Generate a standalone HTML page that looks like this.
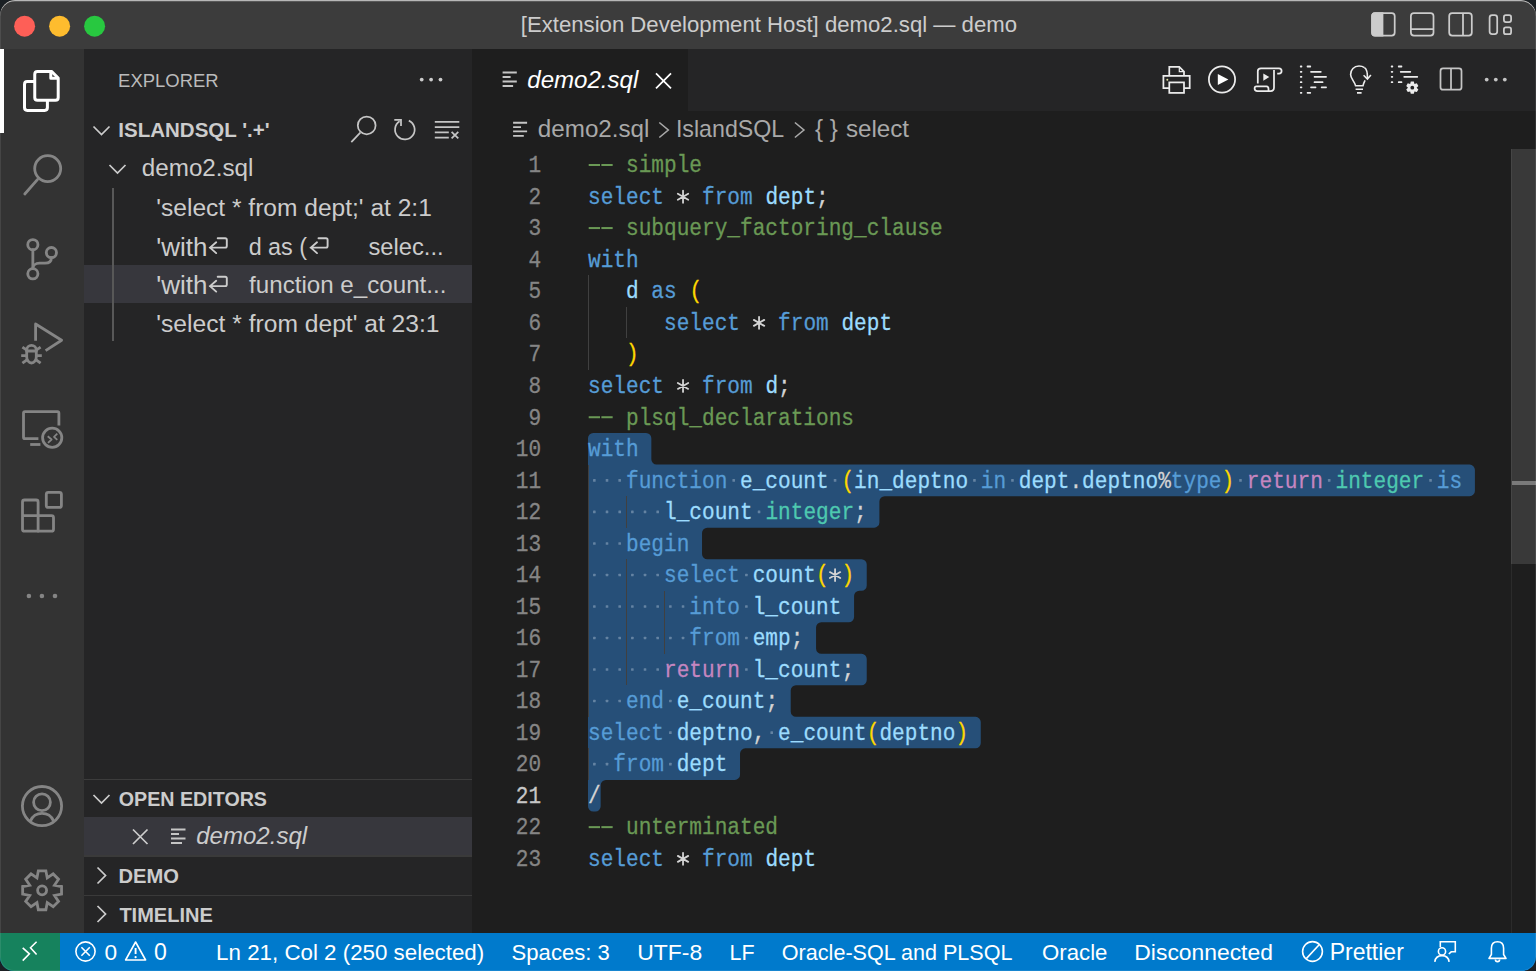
<!DOCTYPE html><html><head><meta charset="utf-8"><style>
html,body{margin:0;padding:0;width:1536px;height:971px;overflow:hidden;background:#1b2024;}
.win{position:absolute;left:0;top:0;width:1536px;height:971px;overflow:hidden;border-radius:15px 15px 14px 14px;background:#1e1e1e;}
.bord{position:absolute;left:0;top:0;width:1536px;height:971px;border-radius:15px 15px 14px 14px;box-shadow:inset 0 0 0 1px rgba(255,255,255,0.09);pointer-events:none;}
.t{position:absolute;white-space:pre;line-height:1;}
svg{position:absolute;left:0;top:0;overflow:visible}
</style></head><body><div class="win">
<div style="position:absolute;left:0px;top:0px;width:1536px;height:49px;background:#3c3c3c;"></div>
<div style="position:absolute;left:0;top:0;width:1536px;height:30px;border-radius:15px 15px 0 0;box-shadow:inset 0 1.3px 0 0 #b0b0b0;"></div>
<div style="position:absolute;left:0px;top:49px;width:84px;height:884px;background:#333333;"></div>
<div style="position:absolute;left:0px;top:49px;width:3.5px;height:84px;background:#ffffff;"></div>
<div style="position:absolute;left:84px;top:49px;width:388px;height:884px;background:#252526;"></div>
<div style="position:absolute;left:472px;top:49px;width:1064px;height:61.5px;background:#252526;"></div>
<div style="position:absolute;left:472px;top:49px;width:216px;height:61.5px;background:#1e1e1e;"></div>
<div style="position:absolute;left:0px;top:932.5px;width:1536px;height:38.5px;background:#007acc;"></div>
<div style="position:absolute;left:0px;top:932.5px;width:60px;height:38.5px;background:#16825d;"></div>
<svg width="1536" height="971"><circle cx="24.6" cy="26.2" r="10.5" fill="#fe5f57"/><circle cx="59.6" cy="26.2" r="10.5" fill="#febc2e"/><circle cx="94.6" cy="26.2" r="10.5" fill="#28c840"/></svg>
<div class="t" style="left:520.75px;top:14.40px;font-size:22.16px;color:#cccccc;font-weight:normal;font-style:normal;font-family:'Liberation Sans', sans-serif;">[Extension Development Host] demo2.sql — demo</div>
<svg width="1536" height="971" fill="none" stroke="#cccccc" stroke-width="1.75"><rect x="1372.1" y="13" width="22.6" height="22.6" rx="3"/><path d="M1372.1,16 Q1372.1,13 1375.1,13 L1382.5,13 L1382.5,35.6 L1375.1,35.6 Q1372.1,35.6 1372.1,32.6 Z" fill="#cccccc"/><rect x="1410.9" y="13" width="22.6" height="22.6" rx="3"/><line x1="1410.9" y1="29" x2="1433.5" y2="29"/><rect x="1449.2" y="13" width="22.6" height="22.6" rx="3"/><line x1="1463" y1="13" x2="1463" y2="35.6"/><rect x="1489.6" y="15.2" width="7.6" height="18.8" rx="2.5"/><rect x="1503.9" y="15.2" width="7.2" height="6.8" rx="2"/><rect x="1503.9" y="27.4" width="7.2" height="6.8" rx="2"/></svg>
<svg width="1536" height="971" fill="none" stroke="#ffffff" stroke-width="3" stroke-linejoin="round"><path d="M34.75,74.2 Q34.75,71.4 37.5,71.4 L51.5,71.4 L58.2,78 L58.2,97.4 Q58.2,100.2 55.4,100.2 L37.5,100.2 Q34.75,100.2 34.75,97.4 Z"/><path d="M50.8,71.4 L50.8,78.3 L58.2,78.3"/><path d="M34.75,81.6 L27.3,81.6 Q24.5,81.6 24.5,84.4 L24.5,107.6 Q24.5,110.4 27.3,110.4 L44.6,110.4 Q47.4,110.4 47.4,107.6 L47.4,100.2"/></svg>
<svg width="1536" height="971" fill="none" stroke="#858585" stroke-width="2.8" stroke-linecap="round" stroke-linejoin="round"><circle cx="47.7" cy="168.6" r="13"/><line x1="24.8" y1="194" x2="37.6" y2="179.4"/><circle cx="32.85" cy="244.65" r="5.1"/><circle cx="51.4" cy="252.6" r="5.1"/><circle cx="32.85" cy="273.8" r="5.1"/><line x1="32.85" y1="249.8" x2="32.85" y2="268.7"/><path d="M51.4,257.7 C51.4,261.5 49,263.2 45,263.2 L39.5,263.2 C35.5,263.2 32.85,265.5 32.85,268.7"/><path d="M35.6,340.8 L35.6,324 L61.6,340.3 L45.6,350.6" stroke-linecap="butt"/><path d="M26.7,357 L26.7,350.2 A4.8,4.8 0 0 1 36.3,350.2 L36.3,357 A4.8,6 0 0 1 26.7,357 Z"/><line x1="26.7" y1="351" x2="36.3" y2="351"/><path d="M22.4,347.2 L26.8,350.2 M40.6,347.2 L36.2,350.2 M21.2,355.6 L26.7,355.6 M41.8,355.6 L36.3,355.6 M22.4,363.2 L26.9,359.8 M40.6,363.2 L36.1,359.8" stroke-linecap="butt"/><path d="M58.9,425.5 L58.9,413.2 Q58.9,411.7 57.4,411.7 L25,411.7 Q23.5,411.7 23.5,413.2 L23.5,437.2 Q23.5,438.7 25,438.7 L38.4,438.7" stroke-linecap="butt"/><line x1="30.2" y1="444.5" x2="40.4" y2="444.5" stroke-linecap="butt"/><circle cx="52.2" cy="437.7" r="9.6"/><path d="M47.7,436.2 L51.6,439.5 L48,442.8 M57.3,433.6 L54,436.8 L57.3,439.8" stroke-width="1.8" stroke-linecap="butt"/><path d="M38.1,515.6 L38.1,502 Q38.1,500 36.1,500 L24.5,500 Q22.5,500 22.5,502 L22.5,529.2 Q22.5,531.2 24.5,531.2 L51.5,531.2 Q53.5,531.2 53.5,529.2 L53.5,517.6 Q53.5,515.6 51.5,515.6 L22.5,515.6"/><line x1="38.1" y1="515.6" x2="38.1" y2="531.2"/><rect x="46.3" y="492.3" width="15.1" height="15.1" rx="2"/><circle cx="42" cy="806.1" r="19.6"/><circle cx="42" cy="802.2" r="8.4"/><path d="M30.6,820.6 C32.6,816 37,813.3 42,813.3 C47,813.3 51.4,816 53.4,820.6"/></svg>
<svg width="1536" height="971" fill="#858585"><circle cx="28.9" cy="596" r="2.3"/><circle cx="41.9" cy="596" r="2.3"/><circle cx="55" cy="596" r="2.3"/></svg>
<svg width="1536" height="971" fill="none" stroke="#858585" stroke-width="2.8" stroke-linejoin="miter"><path d="M36.97,877.92 L38.32,870.86 L45.88,870.86 L47.23,877.92 L53.17,873.89 L58.51,879.23 L54.48,885.17 L61.54,886.52 L61.54,894.08 L54.48,895.43 L58.51,901.37 L53.17,906.71 L47.23,902.68 L45.88,909.74 L38.32,909.74 L36.97,902.68 L31.03,906.71 L25.69,901.37 L29.72,895.43 L22.66,894.08 L22.66,886.52 L29.72,885.17 L25.69,879.23 L31.03,873.89 Z"/><circle cx="42.1" cy="890.3" r="4.5"/></svg>
<div class="t" style="left:118.12px;top:72.40px;font-size:18.48px;color:#bbbbbb;font-weight:normal;font-style:normal;font-family:'Liberation Sans', sans-serif;">EXPLORER</div>
<svg width="1536" height="971" fill="#cccccc"><circle cx="421.7" cy="79.6" r="1.9"/><circle cx="431.1" cy="79.6" r="1.9"/><circle cx="440.5" cy="79.6" r="1.9"/></svg>
<svg width="1536" height="971" fill="none" stroke="#cccccc" stroke-width="1.75" stroke-linecap="butt" stroke-linejoin="miter"><path d="M93.5,126.5 L101.5,134.5 L109.5,126.5"/><path d="M109.5,165 L117.5,173 L125.5,165"/><path d="M93.5,795 L101.5,803 L109.5,795"/><path d="M97.5,867.5 L105.5,875.5 L97.5,883.5"/><path d="M97.5,906 L105.5,914 L97.5,922"/></svg>
<svg width="1536" height="971" fill="none" stroke="#c5c5c5" stroke-width="1.75"><circle cx="366.7" cy="125.4" r="8.9"/><line x1="351.3" y1="142.2" x2="360.3" y2="132.6"/><path d="M408.8,120.6 A9.8,9.8 0 1 1 399.6,121.3"/><path d="M394.3,119.8 L401,119.8 L401,126"/><path d="M434.8,121.8 L459.3,121.8 M434.8,127 L459.3,127 M434.8,132.3 L448.8,132.3 M434.8,137.6 L448.8,137.6 M451.6,131.8 L458.3,138.4 M458.3,131.8 L451.6,138.4"/></svg>
<div class="t" style="left:118.37px;top:120.10px;font-size:20.51px;color:#cccccc;font-weight:bold;font-style:normal;font-family:'Liberation Sans', sans-serif;">ISLANDSQL &#x27;.+&#x27;</div>
<div class="t" style="left:141.83px;top:156.30px;font-size:24.2px;color:#cccccc;font-weight:normal;font-style:normal;font-family:'Liberation Sans', sans-serif;">demo2.sql</div>
<div style="position:absolute;left:84px;top:264.8px;width:388px;height:38.4px;background:#37373d;"></div>
<div style="position:absolute;left:112.4px;top:188px;width:1.2px;height:153px;background:#585858;"></div>
<div class="t" style="left:156.37px;top:196.00px;font-size:24.55px;color:#cccccc;font-weight:normal;font-style:normal;font-family:'Liberation Sans', sans-serif;">&#x27;select * from dept;&#x27; at 2:1</div>
<div class="t" style="left:156.3px;top:233.50px;font-size:25.98px;color:#cccccc;font-weight:normal;font-style:normal;font-family:'Liberation Sans', sans-serif;">&#x27;with</div>
<div class="t" style="left:248.67px;top:235.50px;font-size:23.35px;color:#cccccc;font-weight:normal;font-style:normal;font-family:'Liberation Sans', sans-serif;">d as (</div>
<div class="t" style="left:368.43px;top:235.50px;font-size:23.72px;color:#cccccc;font-weight:normal;font-style:normal;font-family:'Liberation Sans', sans-serif;">selec...</div>
<div class="t" style="left:156.3px;top:272.00px;font-size:25.98px;color:#cccccc;font-weight:normal;font-style:normal;font-family:'Liberation Sans', sans-serif;">&#x27;with</div>
<div class="t" style="left:249.06px;top:273.00px;font-size:24.17px;color:#cccccc;font-weight:normal;font-style:normal;font-family:'Liberation Sans', sans-serif;">function e_count...</div>
<svg width="1536" height="971" fill="none" stroke="#cccccc" stroke-width="1.9" stroke-linejoin="round" stroke-linecap="round"><path d="M209.7,247.6 L225.2,247.6 Q226.79999999999998,247.6 226.79999999999998,246.0 L226.79999999999998,239.79999999999998 Q226.79999999999998,238.2 225.2,238.2 L217.7,238.2 M216.2,242.29999999999998 L210.0,247.6 L216.2,253.1"/><path d="M310.5,247.6 L326,247.6 Q327.6,247.6 327.6,246.0 L327.6,239.79999999999998 Q327.6,238.2 326,238.2 L318.5,238.2 M317,242.29999999999998 L310.8,247.6 L317,253.1"/><path d="M209.7,286.1 L225.2,286.1 Q226.79999999999998,286.1 226.79999999999998,284.5 L226.79999999999998,278.3 Q226.79999999999998,276.70000000000005 225.2,276.70000000000005 L217.7,276.70000000000005 M216.2,280.8 L210.0,286.1 L216.2,291.6"/></svg>
<div class="t" style="left:156.37px;top:311.50px;font-size:24.63px;color:#cccccc;font-weight:normal;font-style:normal;font-family:'Liberation Sans', sans-serif;">&#x27;select * from dept&#x27; at 23:1</div>
<div style="position:absolute;left:84px;top:778.5px;width:388px;height:1px;background:#3c3c3c;"></div>
<div class="t" style="left:118.81px;top:789.90px;font-size:19.66px;color:#cccccc;font-weight:bold;font-style:normal;font-family:'Liberation Sans', sans-serif;">OPEN EDITORS</div>
<div style="position:absolute;left:84px;top:817px;width:388px;height:38.2px;background:#37373d;"></div>
<svg width="1536" height="971" fill="none" stroke="#cccccc" stroke-width="1.75"><path d="M133,829.5 L147.5,844 M147.5,829.5 L133,844"/></svg>
<svg width="1536" height="971" fill="none" stroke="#c5c5c5" stroke-width="1.9"><path d="M171,829.5 L185.5,829.5 M171,834 L179,834 M171,838.5 L185.5,838.5 M171,843 L182,843"/></svg>
<div class="t" style="left:196.18px;top:823.50px;font-size:24.05px;color:#cccccc;font-weight:normal;font-style:italic;font-family:'Liberation Sans', sans-serif;">demo2.sql</div>
<div style="position:absolute;left:84px;top:855.2px;width:388px;height:1.5px;background:#3a3a3a;"></div>
<div class="t" style="left:118.39px;top:866.20px;font-size:20.16px;color:#cccccc;font-weight:bold;font-style:normal;font-family:'Liberation Sans', sans-serif;">DEMO</div>
<div style="position:absolute;left:84px;top:894.5px;width:388px;height:1.2px;background:#3a3a3a;"></div>
<div class="t" style="left:119.4px;top:904.70px;font-size:20.02px;color:#cccccc;font-weight:bold;font-style:normal;font-family:'Liberation Sans', sans-serif;">TIMELINE</div>
<svg width="1536" height="971" fill="none" stroke="#c5c5c5" stroke-width="1.9"><path d="M502.6,72.5 L516.8,72.5 M502.6,77 L510.6,77 M502.6,81.5 L516.8,81.5 M502.6,86 L513.1,86"/><path d="M513.1,122.7 L527.1,122.7 M513.1,127.1 L521,127.1 M513.1,131.4 L527.1,131.4 M513.1,135.9 L523.8,135.9"/></svg>
<div class="t" style="left:527.28px;top:68.10px;font-size:24.07px;color:#ffffff;font-weight:normal;font-style:italic;font-family:'Liberation Sans', sans-serif;">demo2.sql</div>
<svg width="1536" height="971" fill="none" stroke="#ffffff" stroke-width="1.75"><path d="M656,73.3 L671,88.3 M671,73.3 L656,88.3"/></svg>
<div class="t" style="left:537.83px;top:117.20px;font-size:24.2px;color:#a9a9a9;font-weight:normal;font-style:normal;font-family:'Liberation Sans', sans-serif;">demo2.sql</div>
<div class="t" style="left:675.91px;top:118.20px;font-size:23.19px;color:#a9a9a9;font-weight:normal;font-style:normal;font-family:'Liberation Sans', sans-serif;">IslandSQL</div>
<div class="t" style="left:845.92px;top:117.20px;font-size:24.17px;color:#a9a9a9;font-weight:normal;font-style:normal;font-family:'Liberation Sans', sans-serif;">select</div>
<svg width="1536" height="971" fill="none" stroke="#a9a9a9" stroke-width="1.6"><path d="M659.3,122.5 L668.3,130 L659.3,137.5 M794.9,122.5 L803.9,130 L794.9,137.5"/></svg>
<div class="t" style="left:815px;top:117.20px;font-size:24.2px;color:#a9a9a9;font-weight:normal;font-style:normal;font-family:'Liberation Sans', sans-serif;">{ }</div>
<svg width="1536" height="971" fill="none" stroke="#ececec" stroke-width="1.75" stroke-linejoin="miter"><path d="M1169.3,75.3 L1169.3,66.9 L1179.3,66.9 L1184,71.6 L1184,75.3"/><path d="M1179.3,66.9 L1179.3,71.6 L1184,71.6" stroke-width="1.2"/><path d="M1169.3,88.1 L1163.4,88.1 L1163.4,75.9 L1189.7,75.9 L1189.7,88.1 L1184,88.1"/><rect x="1169.3" y="82.4" width="14.7" height="10.5"/><circle cx="1222" cy="79.5" r="13.1"/><path d="M1217.8,74.1 L1228.4,79.6 L1217.8,85 Z" fill="#ffffff" stroke="none"/><path d="M1257.8,83.5 L1257.8,71 Q1257.8,68.3 1261,68.3 L1279,68.3 Q1281.6,68.3 1281.6,71 Q1281.6,73.6 1279,73.6 L1277.2,73.6" stroke-width="1.75"/><path d="M1274,70 L1274,87.5 Q1274,91.1 1270.5,91.1 L1257.5,91.1 Q1254.6,91.1 1254.6,88.5 Q1254.6,86.3 1256.5,86.3 L1266.5,86.3 Q1268.5,86.3 1268.5,89 L1268.5,91"/><path d="M1263.3,73.6 L1269.3,77.1 L1263.3,80.7 Z" fill="#ececec" stroke="none"/><circle cx="1167.3" cy="79.8" r="1" fill="#e0e0a0" stroke="none"/><path d="M1364.5,67.6 C1362.9,66.5 1361,66 1359,66 C1354,66 1350.6,69.8 1350.6,74.5 C1350.6,78.5 1354.5,81.5 1355.6,85.7 L1363,85.7 C1363.5,83.6 1364.3,82 1365.1,80.3" stroke-width="1.6"/><path d="M1364.5,67.6 C1366.7,69.1 1367.6,71.6 1367.4,78" stroke-width="1.6"/><path d="M1363.6,75.3 L1367.4,79 L1370.9,75" stroke-width="1.6"/><path d="M1355.6,89.2 L1363,89.2 M1357,92.9 L1361.6,92.9" stroke-width="1.6"/></svg>
<svg width="1536" height="971" fill="#ececec"><rect x="1299.9" y="65.60" width="2.40" height="1.8" rx="0.7"/><rect x="1299.9" y="70.90" width="2.40" height="1.8" rx="0.7"/><rect x="1299.9" y="76.00" width="2.40" height="1.8" rx="0.7"/><rect x="1299.9" y="81.30" width="2.40" height="1.8" rx="0.7"/><rect x="1299.9" y="86.50" width="2.40" height="1.8" rx="0.7"/><rect x="1299.9" y="92.00" width="2.40" height="1.8" rx="0.7"/><rect x="1306.7" y="65.60" width="4.40" height="1.8" rx="0.7"/><rect x="1310.2" y="70.90" width="11.40" height="1.8" rx="0.7"/><rect x="1313.7" y="76.00" width="13.20" height="1.8" rx="0.7"/><rect x="1313.7" y="81.30" width="9.70" height="1.8" rx="0.7"/><rect x="1310.2" y="86.50" width="6.20" height="1.8" rx="0.7"/><rect x="1320.8" y="86.50" width="6.10" height="1.8" rx="0.7"/><rect x="1306.7" y="92.00" width="4.40" height="1.8" rx="0.7"/><rect x="1390.8" y="65.60" width="2.40" height="1.8" rx="0.7"/><rect x="1390.8" y="70.90" width="2.40" height="1.8" rx="0.7"/><rect x="1390.8" y="76.00" width="2.40" height="1.8" rx="0.7"/><rect x="1390.8" y="81.30" width="2.40" height="1.8" rx="0.7"/><rect x="1397.9" y="65.60" width="4.40" height="1.8" rx="0.7"/><rect x="1399.9" y="70.90" width="11.20" height="1.8" rx="0.7"/><rect x="1403.4" y="76.00" width="14.70" height="1.8" rx="0.7"/><rect x="1397.9" y="81.30" width="4.40" height="1.8" rx="0.7"/></svg>
<svg width="1536" height="971" fill="none" stroke="#c5c5c5" stroke-width="1.75"><rect x="1440.5" y="68.4" width="21" height="21.3" rx="2.5"/><line x1="1451" y1="68.4" x2="1451" y2="89.7"/></svg>
<svg width="1536" height="971"><path d="M1410.15,83.98 L1410.78,81.59 L1413.82,81.59 L1414.45,83.98 L1416.83,83.32 L1418.36,85.96 L1416.60,87.70 L1418.36,89.44 L1416.83,92.08 L1414.45,91.42 L1413.82,93.81 L1410.78,93.81 L1410.15,91.42 L1407.77,92.08 L1406.24,89.44 L1408.00,87.70 L1406.24,85.96 L1407.77,83.32 Z" fill="#ececec"/><circle cx="1412.3" cy="87.7" r="1.9" fill="#252526"/></svg>
<svg width="1536" height="971" fill="#c5c5c5"><circle cx="1486.7" cy="79.6" r="1.9"/><circle cx="1495.8" cy="79.6" r="1.9"/><circle cx="1504.8" cy="79.6" r="1.9"/></svg>
<svg width="1536" height="971"><path d="M588.0,438.32 A5.25,5.25 0 0 1 593.25,433.07 L646.10,433.07 A5.25,5.25 0 0 1 651.35,438.32 L651.35,459.35 A5.25,5.25 0 0 0 656.60,464.60 L1469.65,464.60 A5.25,5.25 0 0 1 1474.90,469.85 L1474.90,490.88 A5.25,5.25 0 0 1 1469.65,496.13 L884.66,496.13 A5.25,5.25 0 0 0 879.41,501.38 L879.41,522.41 A5.25,5.25 0 0 1 874.16,527.66 L707.28,527.66 A5.25,5.25 0 0 0 702.03,532.91 L702.03,553.94 A5.25,5.25 0 0 0 707.28,559.19 L861.49,559.19 A5.25,5.25 0 0 1 866.74,564.44 L866.74,585.47 A5.25,5.25 0 0 1 861.49,590.72 L859.32,590.72 A5.25,5.25 0 0 0 854.07,595.97 L854.07,617.00 A5.25,5.25 0 0 1 848.82,622.25 L821.31,622.25 A5.25,5.25 0 0 0 816.06,627.50 L816.06,648.53 A5.25,5.25 0 0 0 821.31,653.78 L861.49,653.78 A5.25,5.25 0 0 1 866.74,659.03 L866.74,680.06 A5.25,5.25 0 0 1 861.49,685.31 L795.97,685.31 A5.25,5.25 0 0 0 790.72,690.56 L790.72,711.59 A5.25,5.25 0 0 0 795.97,716.84 L975.52,716.84 A5.25,5.25 0 0 1 980.77,722.09 L980.77,743.12 A5.25,5.25 0 0 1 975.52,748.37 L745.29,748.37 A5.25,5.25 0 0 0 740.04,753.62 L740.04,774.65 A5.25,5.25 0 0 1 734.79,779.90 L605.92,779.90 A5.25,5.25 0 0 0 600.67,785.15 L600.67,806.18 A5.25,5.25 0 0 1 595.42,811.43 L593.25,811.43 A5.25,5.25 0 0 1 588.0,806.18 Z" fill="#264f78"/></svg>
<div style="position:absolute;left:587.8px;top:275.42px;width:1.4px;height:94.59px;background:#404040;"></div>
<div style="position:absolute;left:625.81px;top:306.95000000000005px;width:1.4px;height:31.53px;background:#404040;"></div>
<div style="position:absolute;left:587.8px;top:464.6px;width:1.4px;height:252.24px;background:#404040;"></div>
<div style="position:absolute;left:625.81px;top:496.13000000000005px;width:1.4px;height:31.53px;background:#404040;"></div>
<div style="position:absolute;left:625.81px;top:559.19px;width:1.4px;height:126.12px;background:#404040;"></div>
<div style="position:absolute;left:663.8199999999999px;top:590.72px;width:1.4px;height:63.06px;background:#404040;"></div>
<div style="position:absolute;left:587.8px;top:748.3700000000001px;width:1.4px;height:31.53px;background:#404040;"></div>
<svg width="1536" height="971" fill="#6483a2"><rect x="593.04" y="479.06" width="2.6" height="2.6" rx="0.5"/><rect x="605.71" y="479.06" width="2.6" height="2.6" rx="0.5"/><rect x="618.38" y="479.06" width="2.6" height="2.6" rx="0.5"/><rect x="732.41" y="479.06" width="2.6" height="2.6" rx="0.5"/><rect x="833.77" y="479.06" width="2.6" height="2.6" rx="0.5"/><rect x="973.14" y="479.06" width="2.6" height="2.6" rx="0.5"/><rect x="1011.15" y="479.06" width="2.6" height="2.6" rx="0.5"/><rect x="1239.21" y="479.06" width="2.6" height="2.6" rx="0.5"/><rect x="1327.90" y="479.06" width="2.6" height="2.6" rx="0.5"/><rect x="1429.26" y="479.06" width="2.6" height="2.6" rx="0.5"/><rect x="593.04" y="510.60" width="2.6" height="2.6" rx="0.5"/><rect x="605.71" y="510.60" width="2.6" height="2.6" rx="0.5"/><rect x="618.38" y="510.60" width="2.6" height="2.6" rx="0.5"/><rect x="631.05" y="510.60" width="2.6" height="2.6" rx="0.5"/><rect x="643.72" y="510.60" width="2.6" height="2.6" rx="0.5"/><rect x="656.39" y="510.60" width="2.6" height="2.6" rx="0.5"/><rect x="757.75" y="510.60" width="2.6" height="2.6" rx="0.5"/><rect x="593.04" y="542.13" width="2.6" height="2.6" rx="0.5"/><rect x="605.71" y="542.13" width="2.6" height="2.6" rx="0.5"/><rect x="618.38" y="542.13" width="2.6" height="2.6" rx="0.5"/><rect x="593.04" y="573.66" width="2.6" height="2.6" rx="0.5"/><rect x="605.71" y="573.66" width="2.6" height="2.6" rx="0.5"/><rect x="618.38" y="573.66" width="2.6" height="2.6" rx="0.5"/><rect x="631.05" y="573.66" width="2.6" height="2.6" rx="0.5"/><rect x="643.72" y="573.66" width="2.6" height="2.6" rx="0.5"/><rect x="656.39" y="573.66" width="2.6" height="2.6" rx="0.5"/><rect x="745.08" y="573.66" width="2.6" height="2.6" rx="0.5"/><rect x="593.04" y="605.19" width="2.6" height="2.6" rx="0.5"/><rect x="605.71" y="605.19" width="2.6" height="2.6" rx="0.5"/><rect x="618.38" y="605.19" width="2.6" height="2.6" rx="0.5"/><rect x="631.05" y="605.19" width="2.6" height="2.6" rx="0.5"/><rect x="643.72" y="605.19" width="2.6" height="2.6" rx="0.5"/><rect x="656.39" y="605.19" width="2.6" height="2.6" rx="0.5"/><rect x="669.06" y="605.19" width="2.6" height="2.6" rx="0.5"/><rect x="681.73" y="605.19" width="2.6" height="2.6" rx="0.5"/><rect x="745.08" y="605.19" width="2.6" height="2.6" rx="0.5"/><rect x="593.04" y="636.72" width="2.6" height="2.6" rx="0.5"/><rect x="605.71" y="636.72" width="2.6" height="2.6" rx="0.5"/><rect x="618.38" y="636.72" width="2.6" height="2.6" rx="0.5"/><rect x="631.05" y="636.72" width="2.6" height="2.6" rx="0.5"/><rect x="643.72" y="636.72" width="2.6" height="2.6" rx="0.5"/><rect x="656.39" y="636.72" width="2.6" height="2.6" rx="0.5"/><rect x="669.06" y="636.72" width="2.6" height="2.6" rx="0.5"/><rect x="681.73" y="636.72" width="2.6" height="2.6" rx="0.5"/><rect x="745.08" y="636.72" width="2.6" height="2.6" rx="0.5"/><rect x="593.04" y="668.25" width="2.6" height="2.6" rx="0.5"/><rect x="605.71" y="668.25" width="2.6" height="2.6" rx="0.5"/><rect x="618.38" y="668.25" width="2.6" height="2.6" rx="0.5"/><rect x="631.05" y="668.25" width="2.6" height="2.6" rx="0.5"/><rect x="643.72" y="668.25" width="2.6" height="2.6" rx="0.5"/><rect x="656.39" y="668.25" width="2.6" height="2.6" rx="0.5"/><rect x="745.08" y="668.25" width="2.6" height="2.6" rx="0.5"/><rect x="593.04" y="699.77" width="2.6" height="2.6" rx="0.5"/><rect x="605.71" y="699.77" width="2.6" height="2.6" rx="0.5"/><rect x="618.38" y="699.77" width="2.6" height="2.6" rx="0.5"/><rect x="669.06" y="699.77" width="2.6" height="2.6" rx="0.5"/><rect x="669.06" y="731.30" width="2.6" height="2.6" rx="0.5"/><rect x="770.42" y="731.30" width="2.6" height="2.6" rx="0.5"/><rect x="593.04" y="762.84" width="2.6" height="2.6" rx="0.5"/><rect x="605.71" y="762.84" width="2.6" height="2.6" rx="0.5"/><rect x="669.06" y="762.84" width="2.6" height="2.6" rx="0.5"/></svg>
<div class="t" style="left:588.0px;top:156.30px;font-family:'Liberation Mono', monospace;font-size:21.113px;color:#d4d4d4;transform:scaleY(1.13);transform-origin:0 16px;-webkit-text-stroke:0.25px currentColor;"><span style="color:#6a9955">   simple</span></div>
<svg width="1536" height="971"><rect x="588.70" y="164.00" width="11.3" height="2" fill="#6a9955"/></svg>
<svg width="1536" height="971"><rect x="601.37" y="164.00" width="11.3" height="2" fill="#6a9955"/></svg>
<div class="t" style="right:994.8px;top:156.30px;font-family:'Liberation Mono', monospace;font-size:21.113px;color:#858585;transform:scaleY(1.13);transform-origin:0 16px;-webkit-text-stroke:0.25px currentColor;">1</div>
<div class="t" style="left:588.0px;top:187.83px;font-family:'Liberation Mono', monospace;font-size:21.113px;color:#d4d4d4;transform:scaleY(1.13);transform-origin:0 16px;-webkit-text-stroke:0.25px currentColor;"><span style="color:#569cd6">select</span> <span style="color:#d4d4d4"> </span> <span style="color:#569cd6">from</span> <span style="color:#9cdcfe">dept</span><span style="color:#d4d4d4">;</span></div>
<svg width="1536" height="971"><path d="M683.03,190.73 L683.03,202.73 M677.83,193.73 L688.22,199.73 M677.83,199.73 L688.22,193.73 " stroke="#d4d4d4" stroke-width="1.8" stroke-linecap="round"/></svg>
<div class="t" style="right:994.8px;top:187.83px;font-family:'Liberation Mono', monospace;font-size:21.113px;color:#858585;transform:scaleY(1.13);transform-origin:0 16px;-webkit-text-stroke:0.25px currentColor;">2</div>
<div class="t" style="left:588.0px;top:219.36px;font-family:'Liberation Mono', monospace;font-size:21.113px;color:#d4d4d4;transform:scaleY(1.13);transform-origin:0 16px;-webkit-text-stroke:0.25px currentColor;"><span style="color:#6a9955">   subquery_factoring_clause</span></div>
<svg width="1536" height="971"><rect x="588.70" y="227.06" width="11.3" height="2" fill="#6a9955"/></svg>
<svg width="1536" height="971"><rect x="601.37" y="227.06" width="11.3" height="2" fill="#6a9955"/></svg>
<div class="t" style="right:994.8px;top:219.36px;font-family:'Liberation Mono', monospace;font-size:21.113px;color:#858585;transform:scaleY(1.13);transform-origin:0 16px;-webkit-text-stroke:0.25px currentColor;">3</div>
<div class="t" style="left:588.0px;top:250.89px;font-family:'Liberation Mono', monospace;font-size:21.113px;color:#d4d4d4;transform:scaleY(1.13);transform-origin:0 16px;-webkit-text-stroke:0.25px currentColor;"><span style="color:#569cd6">with</span></div>
<div class="t" style="right:994.8px;top:250.89px;font-family:'Liberation Mono', monospace;font-size:21.113px;color:#858585;transform:scaleY(1.13);transform-origin:0 16px;-webkit-text-stroke:0.25px currentColor;">4</div>
<div class="t" style="left:588.0px;top:282.42px;font-family:'Liberation Mono', monospace;font-size:21.113px;color:#d4d4d4;transform:scaleY(1.13);transform-origin:0 16px;-webkit-text-stroke:0.25px currentColor;">   <span style="color:#9cdcfe">d</span> <span style="color:#569cd6">as</span> <span style="color:#ffd700">(</span></div>
<div class="t" style="right:994.8px;top:282.42px;font-family:'Liberation Mono', monospace;font-size:21.113px;color:#858585;transform:scaleY(1.13);transform-origin:0 16px;-webkit-text-stroke:0.25px currentColor;">5</div>
<div class="t" style="left:588.0px;top:313.95px;font-family:'Liberation Mono', monospace;font-size:21.113px;color:#d4d4d4;transform:scaleY(1.13);transform-origin:0 16px;-webkit-text-stroke:0.25px currentColor;">      <span style="color:#569cd6">select</span> <span style="color:#d4d4d4"> </span> <span style="color:#569cd6">from</span> <span style="color:#9cdcfe">dept</span></div>
<svg width="1536" height="971"><path d="M759.05,316.85 L759.05,328.85 M753.85,319.85 L764.24,325.85 M753.85,325.85 L764.24,319.85 " stroke="#d4d4d4" stroke-width="1.8" stroke-linecap="round"/></svg>
<div class="t" style="right:994.8px;top:313.95px;font-family:'Liberation Mono', monospace;font-size:21.113px;color:#858585;transform:scaleY(1.13);transform-origin:0 16px;-webkit-text-stroke:0.25px currentColor;">6</div>
<div class="t" style="left:588.0px;top:345.48px;font-family:'Liberation Mono', monospace;font-size:21.113px;color:#d4d4d4;transform:scaleY(1.13);transform-origin:0 16px;-webkit-text-stroke:0.25px currentColor;">   <span style="color:#ffd700">)</span></div>
<div class="t" style="right:994.8px;top:345.48px;font-family:'Liberation Mono', monospace;font-size:21.113px;color:#858585;transform:scaleY(1.13);transform-origin:0 16px;-webkit-text-stroke:0.25px currentColor;">7</div>
<div class="t" style="left:588.0px;top:377.01px;font-family:'Liberation Mono', monospace;font-size:21.113px;color:#d4d4d4;transform:scaleY(1.13);transform-origin:0 16px;-webkit-text-stroke:0.25px currentColor;"><span style="color:#569cd6">select</span> <span style="color:#d4d4d4"> </span> <span style="color:#569cd6">from</span> <span style="color:#9cdcfe">d</span><span style="color:#d4d4d4">;</span></div>
<svg width="1536" height="971"><path d="M683.03,379.91 L683.03,391.91 M677.83,382.91 L688.22,388.91 M677.83,388.91 L688.22,382.91 " stroke="#d4d4d4" stroke-width="1.8" stroke-linecap="round"/></svg>
<div class="t" style="right:994.8px;top:377.01px;font-family:'Liberation Mono', monospace;font-size:21.113px;color:#858585;transform:scaleY(1.13);transform-origin:0 16px;-webkit-text-stroke:0.25px currentColor;">8</div>
<div class="t" style="left:588.0px;top:408.54px;font-family:'Liberation Mono', monospace;font-size:21.113px;color:#d4d4d4;transform:scaleY(1.13);transform-origin:0 16px;-webkit-text-stroke:0.25px currentColor;"><span style="color:#6a9955">   plsql_declarations</span></div>
<svg width="1536" height="971"><rect x="588.70" y="416.24" width="11.3" height="2" fill="#6a9955"/></svg>
<svg width="1536" height="971"><rect x="601.37" y="416.24" width="11.3" height="2" fill="#6a9955"/></svg>
<div class="t" style="right:994.8px;top:408.54px;font-family:'Liberation Mono', monospace;font-size:21.113px;color:#858585;transform:scaleY(1.13);transform-origin:0 16px;-webkit-text-stroke:0.25px currentColor;">9</div>
<div class="t" style="left:588.0px;top:440.07px;font-family:'Liberation Mono', monospace;font-size:21.113px;color:#d4d4d4;transform:scaleY(1.13);transform-origin:0 16px;-webkit-text-stroke:0.25px currentColor;"><span style="color:#569cd6">with</span></div>
<div class="t" style="right:994.8px;top:440.07px;font-family:'Liberation Mono', monospace;font-size:21.113px;color:#858585;transform:scaleY(1.13);transform-origin:0 16px;-webkit-text-stroke:0.25px currentColor;">10</div>
<div class="t" style="left:588.0px;top:471.60px;font-family:'Liberation Mono', monospace;font-size:21.113px;color:#d4d4d4;transform:scaleY(1.13);transform-origin:0 16px;-webkit-text-stroke:0.25px currentColor;">   <span style="color:#569cd6">function</span> <span style="color:#9cdcfe">e_count</span> <span style="color:#ffd700">(</span><span style="color:#9cdcfe">in_deptno</span> <span style="color:#569cd6">in</span> <span style="color:#9cdcfe">dept</span><span style="color:#d4d4d4">.</span><span style="color:#9cdcfe">deptno</span><span style="color:#d4d4d4">%</span><span style="color:#569cd6">type</span><span style="color:#ffd700">)</span> <span style="color:#c586c0">return</span> <span style="color:#4ec9b0">integer</span> <span style="color:#569cd6">is</span></div>
<div class="t" style="right:994.8px;top:471.60px;font-family:'Liberation Mono', monospace;font-size:21.113px;color:#858585;transform:scaleY(1.13);transform-origin:0 16px;-webkit-text-stroke:0.25px currentColor;">11</div>
<div class="t" style="left:588.0px;top:503.13px;font-family:'Liberation Mono', monospace;font-size:21.113px;color:#d4d4d4;transform:scaleY(1.13);transform-origin:0 16px;-webkit-text-stroke:0.25px currentColor;">      <span style="color:#9cdcfe">l_count</span> <span style="color:#4ec9b0">integer</span><span style="color:#d4d4d4">;</span></div>
<div class="t" style="right:994.8px;top:503.13px;font-family:'Liberation Mono', monospace;font-size:21.113px;color:#858585;transform:scaleY(1.13);transform-origin:0 16px;-webkit-text-stroke:0.25px currentColor;">12</div>
<div class="t" style="left:588.0px;top:534.66px;font-family:'Liberation Mono', monospace;font-size:21.113px;color:#d4d4d4;transform:scaleY(1.13);transform-origin:0 16px;-webkit-text-stroke:0.25px currentColor;">   <span style="color:#569cd6">begin</span></div>
<div class="t" style="right:994.8px;top:534.66px;font-family:'Liberation Mono', monospace;font-size:21.113px;color:#858585;transform:scaleY(1.13);transform-origin:0 16px;-webkit-text-stroke:0.25px currentColor;">13</div>
<div class="t" style="left:588.0px;top:566.19px;font-family:'Liberation Mono', monospace;font-size:21.113px;color:#d4d4d4;transform:scaleY(1.13);transform-origin:0 16px;-webkit-text-stroke:0.25px currentColor;">      <span style="color:#569cd6">select</span> <span style="color:#9cdcfe">count</span><span style="color:#ffd700">(</span><span style="color:#d4d4d4"> </span><span style="color:#ffd700">)</span></div>
<svg width="1536" height="971"><path d="M835.07,569.09 L835.07,581.09 M829.87,572.09 L840.26,578.09 M829.87,578.09 L840.26,572.09 " stroke="#d4d4d4" stroke-width="1.8" stroke-linecap="round"/></svg>
<div class="t" style="right:994.8px;top:566.19px;font-family:'Liberation Mono', monospace;font-size:21.113px;color:#858585;transform:scaleY(1.13);transform-origin:0 16px;-webkit-text-stroke:0.25px currentColor;">14</div>
<div class="t" style="left:588.0px;top:597.72px;font-family:'Liberation Mono', monospace;font-size:21.113px;color:#d4d4d4;transform:scaleY(1.13);transform-origin:0 16px;-webkit-text-stroke:0.25px currentColor;">        <span style="color:#569cd6">into</span> <span style="color:#9cdcfe">l_count</span></div>
<div class="t" style="right:994.8px;top:597.72px;font-family:'Liberation Mono', monospace;font-size:21.113px;color:#858585;transform:scaleY(1.13);transform-origin:0 16px;-webkit-text-stroke:0.25px currentColor;">15</div>
<div class="t" style="left:588.0px;top:629.25px;font-family:'Liberation Mono', monospace;font-size:21.113px;color:#d4d4d4;transform:scaleY(1.13);transform-origin:0 16px;-webkit-text-stroke:0.25px currentColor;">        <span style="color:#569cd6">from</span> <span style="color:#9cdcfe">emp</span><span style="color:#d4d4d4">;</span></div>
<div class="t" style="right:994.8px;top:629.25px;font-family:'Liberation Mono', monospace;font-size:21.113px;color:#858585;transform:scaleY(1.13);transform-origin:0 16px;-webkit-text-stroke:0.25px currentColor;">16</div>
<div class="t" style="left:588.0px;top:660.78px;font-family:'Liberation Mono', monospace;font-size:21.113px;color:#d4d4d4;transform:scaleY(1.13);transform-origin:0 16px;-webkit-text-stroke:0.25px currentColor;">      <span style="color:#c586c0">return</span> <span style="color:#9cdcfe">l_count</span><span style="color:#d4d4d4">;</span></div>
<div class="t" style="right:994.8px;top:660.78px;font-family:'Liberation Mono', monospace;font-size:21.113px;color:#858585;transform:scaleY(1.13);transform-origin:0 16px;-webkit-text-stroke:0.25px currentColor;">17</div>
<div class="t" style="left:588.0px;top:692.31px;font-family:'Liberation Mono', monospace;font-size:21.113px;color:#d4d4d4;transform:scaleY(1.13);transform-origin:0 16px;-webkit-text-stroke:0.25px currentColor;">   <span style="color:#569cd6">end</span> <span style="color:#9cdcfe">e_count</span><span style="color:#d4d4d4">;</span></div>
<div class="t" style="right:994.8px;top:692.31px;font-family:'Liberation Mono', monospace;font-size:21.113px;color:#858585;transform:scaleY(1.13);transform-origin:0 16px;-webkit-text-stroke:0.25px currentColor;">18</div>
<div class="t" style="left:588.0px;top:723.84px;font-family:'Liberation Mono', monospace;font-size:21.113px;color:#d4d4d4;transform:scaleY(1.13);transform-origin:0 16px;-webkit-text-stroke:0.25px currentColor;"><span style="color:#569cd6">select</span> <span style="color:#9cdcfe">deptno</span><span style="color:#d4d4d4">,</span> <span style="color:#9cdcfe">e_count</span><span style="color:#ffd700">(</span><span style="color:#9cdcfe">deptno</span><span style="color:#ffd700">)</span></div>
<div class="t" style="right:994.8px;top:723.84px;font-family:'Liberation Mono', monospace;font-size:21.113px;color:#858585;transform:scaleY(1.13);transform-origin:0 16px;-webkit-text-stroke:0.25px currentColor;">19</div>
<div class="t" style="left:588.0px;top:755.37px;font-family:'Liberation Mono', monospace;font-size:21.113px;color:#d4d4d4;transform:scaleY(1.13);transform-origin:0 16px;-webkit-text-stroke:0.25px currentColor;">  <span style="color:#569cd6">from</span> <span style="color:#9cdcfe">dept</span></div>
<div class="t" style="right:994.8px;top:755.37px;font-family:'Liberation Mono', monospace;font-size:21.113px;color:#858585;transform:scaleY(1.13);transform-origin:0 16px;-webkit-text-stroke:0.25px currentColor;">20</div>
<div class="t" style="left:588.0px;top:786.90px;font-family:'Liberation Mono', monospace;font-size:21.113px;color:#d4d4d4;transform:scaleY(1.13);transform-origin:0 16px;-webkit-text-stroke:0.25px currentColor;"><span style="color:#d4d4d4">/</span></div>
<div class="t" style="right:994.8px;top:786.90px;font-family:'Liberation Mono', monospace;font-size:21.113px;color:#c6c6c6;transform:scaleY(1.13);transform-origin:0 16px;-webkit-text-stroke:0.25px currentColor;">21</div>
<div class="t" style="left:588.0px;top:818.43px;font-family:'Liberation Mono', monospace;font-size:21.113px;color:#d4d4d4;transform:scaleY(1.13);transform-origin:0 16px;-webkit-text-stroke:0.25px currentColor;"><span style="color:#6a9955">   unterminated</span></div>
<svg width="1536" height="971"><rect x="588.70" y="826.13" width="11.3" height="2" fill="#6a9955"/></svg>
<svg width="1536" height="971"><rect x="601.37" y="826.13" width="11.3" height="2" fill="#6a9955"/></svg>
<div class="t" style="right:994.8px;top:818.43px;font-family:'Liberation Mono', monospace;font-size:21.113px;color:#858585;transform:scaleY(1.13);transform-origin:0 16px;-webkit-text-stroke:0.25px currentColor;">22</div>
<div class="t" style="left:588.0px;top:849.96px;font-family:'Liberation Mono', monospace;font-size:21.113px;color:#d4d4d4;transform:scaleY(1.13);transform-origin:0 16px;-webkit-text-stroke:0.25px currentColor;"><span style="color:#569cd6">select</span> <span style="color:#d4d4d4"> </span> <span style="color:#569cd6">from</span> <span style="color:#9cdcfe">dept</span></div>
<svg width="1536" height="971"><path d="M683.03,852.86 L683.03,864.86 M677.83,855.86 L688.22,861.86 M677.83,861.86 L688.22,855.86 " stroke="#d4d4d4" stroke-width="1.8" stroke-linecap="round"/></svg>
<div class="t" style="right:994.8px;top:849.96px;font-family:'Liberation Mono', monospace;font-size:21.113px;color:#858585;transform:scaleY(1.13);transform-origin:0 16px;-webkit-text-stroke:0.25px currentColor;">23</div>
<div style="position:absolute;left:1511.2px;top:148.75px;width:1.2px;height:784px;background:#2b2b2b;"></div>
<div style="position:absolute;left:1511.2px;top:149px;width:24.8px;height:415px;background:#393939;"></div>
<div style="position:absolute;left:1511.2px;top:149px;width:1.3px;height:415px;background:#454545;"></div>
<div style="position:absolute;left:1512.4px;top:481px;width:23.6px;height:3.6px;background:#7a7a7a;"></div>
<svg width="1536" height="971" fill="none" stroke="#ffffff" stroke-width="1.6"><path d="M22.7,947.8 L29.4,953.9 L22.7,960.6 M36.6,941.7 L30.5,947.8 L36.6,954.5"/><circle cx="85.5" cy="951.5" r="9.6"/><path d="M81.4,947.3 L89.8,955.8 M89.8,947.3 L81.4,955.8"/><path d="M135.6,942 L125.6,960 L145.6,960 Z" stroke-linejoin="round"/><path d="M135.6,948 L135.6,954" stroke-width="1.9"/><circle cx="135.6" cy="957.2" r="1.1" fill="#ffffff" stroke="none"/><circle cx="1312.5" cy="951.5" r="9.9"/><path d="M1306.3,958.6 L1319.6,944.3"/><circle cx="1442" cy="951.4" r="3.6"/><path d="M1434.8,961.8 C1435.3,957.8 1438.4,955.6 1442,955.6 C1445.6,955.6 1448.6,957.8 1449.1,961.8"/><path d="M1440.3,947 L1440.3,941.7 L1455.3,941.7 L1455.3,951.8 L1451.2,951.8 L1448.8,954"/><path d="M1489,958.4 L1506,958.4 L1503.6,954.5 L1503.6,948.2 C1503.6,944 1501,941.7 1497.5,941.7 C1494,941.7 1491.4,944 1491.4,948.2 L1491.4,954.5 Z" stroke-linejoin="round"/><path d="M1495.4,959.5 A2,2 0 0 0 1499.6,959.5"/></svg>
<div class="t" style="left:104.52px;top:940.80px;font-size:22.65px;color:#ffffff;font-weight:normal;font-style:normal;font-family:'Liberation Sans', sans-serif;">0</div>
<div class="t" style="left:154.11px;top:940.80px;font-size:23.06px;color:#ffffff;font-weight:normal;font-style:normal;font-family:'Liberation Sans', sans-serif;">0</div>
<div class="t" style="left:216.11px;top:941.80px;font-size:22.34px;color:#ffffff;font-weight:normal;font-style:normal;font-family:'Liberation Sans', sans-serif;">Ln 21, Col 2 (250 selected)</div>
<div class="t" style="left:511.62px;top:941.80px;font-size:22.08px;color:#ffffff;font-weight:normal;font-style:normal;font-family:'Liberation Sans', sans-serif;">Spaces: 3</div>
<div class="t" style="left:637.19px;top:940.80px;font-size:22.96px;color:#ffffff;font-weight:normal;font-style:normal;font-family:'Liberation Sans', sans-serif;">UTF-8</div>
<div class="t" style="left:729.48px;top:942.80px;font-size:21.49px;color:#ffffff;font-weight:normal;font-style:normal;font-family:'Liberation Sans', sans-serif;">LF</div>
<div class="t" style="left:781.84px;top:941.80px;font-size:21.59px;color:#ffffff;font-weight:normal;font-style:normal;font-family:'Liberation Sans', sans-serif;">Oracle-SQL and PLSQL</div>
<div class="t" style="left:1042.11px;top:941.80px;font-size:22.2px;color:#ffffff;font-weight:normal;font-style:normal;font-family:'Liberation Sans', sans-serif;">Oracle</div>
<div class="t" style="left:1134.37px;top:940.80px;font-size:22.86px;color:#ffffff;font-weight:normal;font-style:normal;font-family:'Liberation Sans', sans-serif;">Disconnected</div>
<div class="t" style="left:1329.66px;top:940.80px;font-size:23.03px;color:#ffffff;font-weight:normal;font-style:normal;font-family:'Liberation Sans', sans-serif;">Prettier</div>
<div class="bord"></div>
</div></body></html>
